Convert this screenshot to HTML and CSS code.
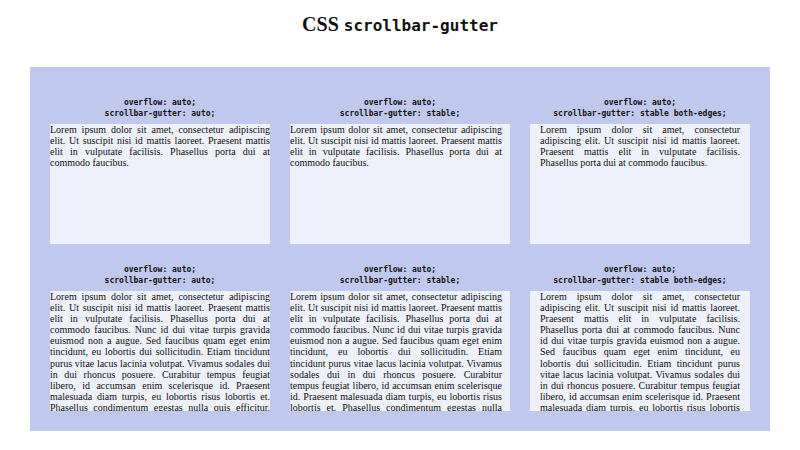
FILE: index.html
```
<!DOCTYPE html>
<html>
<head>
	<meta charset="utf-8">
	<title>CSS scrollbar-gutter</title>
	<link rel="stylesheet" href="styles.css">
</head>
<body>
	<h1 class="title">CSS <code>scrollbar-gutter</code></h1>
	<div class="demo">
		<div class="cell">
			<pre class="label">overflow: auto;
scrollbar-gutter: auto;</pre>
			<div class="box gutter-auto">
				Lorem ipsum dolor sit amet, consectetur adipiscing elit. Ut suscipit nisi id mattis laoreet. Praesent mattis elit in vulputate facilisis. Phasellus porta dui at commodo faucibus.
			</div>
		</div>
		<div class="cell">
			<pre class="label">overflow: auto;
scrollbar-gutter: stable;</pre>
			<div class="box gutter-stable">
				Lorem ipsum dolor sit amet, consectetur adipiscing elit. Ut suscipit nisi id mattis laoreet. Praesent mattis elit in vulputate facilisis. Phasellus porta dui at commodo faucibus.
			</div>
		</div>
		<div class="cell">
			<pre class="label">overflow: auto;
scrollbar-gutter: stable both-edges;</pre>
			<div class="box gutter-both">
				Lorem ipsum dolor sit amet, consectetur adipiscing elit. Ut suscipit nisi id mattis laoreet. Praesent mattis elit in vulputate facilisis. Phasellus porta dui at commodo faucibus.
			</div>
		</div>

		<div class="cell">
			<pre class="label">overflow: auto;
scrollbar-gutter: auto;</pre>
			<div class="box gutter-auto">
				Lorem ipsum dolor sit amet, consectetur adipiscing elit. Ut suscipit nisi id mattis laoreet. Praesent mattis elit in vulputate facilisis. Phasellus porta dui at commodo faucibus. Nunc id dui vitae turpis gravida euismod non a augue. Sed faucibus quam eget enim tincidunt, eu lobortis dui sollicitudin. Etiam tincidunt purus vitae lacus lacinia volutpat. Vivamus sodales dui in dui rhoncus posuere. Curabitur tempus feugiat libero, id accumsan enim scelerisque id. Praesent malesuada diam turpis, eu lobortis risus lobortis et. Phasellus condimentum egestas nulla quis efficitur. Nullam eu tortor ac nisl pulvinar dapibus.
			</div>
		</div>
		<div class="cell">
			<pre class="label">overflow: auto;
scrollbar-gutter: stable;</pre>
			<div class="box gutter-stable">
				Lorem ipsum dolor sit amet, consectetur adipiscing elit. Ut suscipit nisi id mattis laoreet. Praesent mattis elit in vulputate facilisis. Phasellus porta dui at commodo faucibus. Nunc id dui vitae turpis gravida euismod non a augue. Sed faucibus quam eget enim tincidunt, eu lobortis dui sollicitudin. Etiam tincidunt purus vitae lacus lacinia volutpat. Vivamus sodales dui in dui rhoncus posuere. Curabitur tempus feugiat libero, id accumsan enim scelerisque id. Praesent malesuada diam turpis, eu lobortis risus lobortis et. Phasellus condimentum egestas nulla quis efficitur. Nullam eu tortor ac nisl pulvinar dapibus.
			</div>
		</div>
		<div class="cell">
			<pre class="label">overflow: auto;
scrollbar-gutter: stable both-edges;</pre>
			<div class="box gutter-both">
				Lorem ipsum dolor sit amet, consectetur adipiscing elit. Ut suscipit nisi id mattis laoreet. Praesent mattis elit in vulputate facilisis. Phasellus porta dui at commodo faucibus. Nunc id dui vitae turpis gravida euismod non a augue. Sed faucibus quam eget enim tincidunt, eu lobortis dui sollicitudin. Etiam tincidunt purus vitae lacus lacinia volutpat. Vivamus sodales dui in dui rhoncus posuere. Curabitur tempus feugiat libero, id accumsan enim scelerisque id. Praesent malesuada diam turpis, eu lobortis risus lobortis et. Phasellus condimentum egestas nulla quis efficitur. Nullam eu tortor ac nisl pulvinar dapibus.
			</div>
		</div>
	</div>
</body>
</html>
```

FILE: styles.css
```
* {
	margin: 0;
	padding: 0;
	box-sizing: border-box;
}

body {
	font-family: "Liberation Serif", "Times New Roman", serif;
	color: #111;
	background: #fff;
}

.title {
	height: 67px;
	padding-top: 14px;
	font-size: 20px;
	line-height: 20px;
	text-align: center;
}
.title code {
	font-family: "DejaVu Sans Mono", monospace;
	font-weight: bold;
	font-size: 16px;
}

.demo {
	margin: 0 30px;
	padding: 30px 20px 20px;
	background: #c1c8ee;
	display: grid;
	grid-template-columns: repeat(3, 220px);
	gap: 20px;
}

.label {
	font-family: "DejaVu Sans Mono", monospace;
	font-weight: bold;
	font-size: 8px;
	line-height: 11px;
	text-align: center;
	margin-bottom: 5px;
}

/* gutters drawn as padding so the layout doesn't depend on the scrollbar style */
.box {
	height: 120px;
	overflow: hidden;
	background: #eef0fa;
	font-size: 10px;
	line-height: 11.1px;
	text-align: justify;
}
.gutter-stable {
	padding-right: 8px;
}
.gutter-both {
	padding: 0 10px;
}
```
